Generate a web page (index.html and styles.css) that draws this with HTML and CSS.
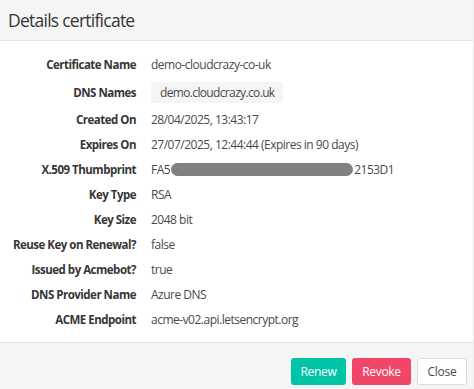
FILE: index.html
```html
<!DOCTYPE html>
<html>
<head>
<meta charset="utf-8">
<link rel="stylesheet" href="styles.css">
</head>
<body>
<div class="modal">
  <header class="head">
    <h1 class="title">Details certificate</h1>
  </header>
  <section class="body">
    <div class="row"><div class="label">Certificate Name</div><div class="value">demo-cloudcrazy-co-uk</div></div>
    <div class="row tall"><div class="label">DNS Names</div><div class="value"><span class="tag">demo.cloudcrazy.co.uk</span></div></div>
    <div class="row"><div class="label">Created On</div><div class="value">28/04/2025, 13:43:17</div></div>
    <div class="row"><div class="label">Expires On</div><div class="value">27/07/2025, 12:44:44 (Expires in 90 days)</div></div>
    <div class="row"><div class="label">X.509 Thumbprint</div><div class="value">FA5<span class="redact"></span>2153D1</div></div>
    <div class="row"><div class="label">Key Type</div><div class="value">RSA</div></div>
    <div class="row"><div class="label">Key Size</div><div class="value">2048 bit</div></div>
    <div class="row"><div class="label">Reuse Key on Renewal?</div><div class="value">false</div></div>
    <div class="row"><div class="label">Issued by Acmebot?</div><div class="value">true</div></div>
    <div class="row"><div class="label">DNS Provider Name</div><div class="value">Azure DNS</div></div>
    <div class="row"><div class="label">ACME Endpoint</div><div class="value">acme-v02.api.letsencrypt.org</div></div>
  </section>
  <footer class="foot">
    <button class="btn renew">Renew</button>
    <button class="btn revoke">Revoke</button>
    <button class="btn close">Close</button>
  </footer>
</div>
</body>
</html>
```
FILE: styles.css
```css
* { box-sizing: border-box; }
html, body { margin: 0; padding: 0; background: #fff; }
body { font-family: "Open Sans", "Noto Sans", sans-serif; color: #4a4a4a; }
.modal { width: 474px; height: 389px; display: flex; flex-direction: column; border-right: 1px solid #ececec; }
.head { height: 41px; background: #f5f5f5; border-bottom: 1px solid #e2e2e2; display: flex; align-items: center; padding-left: 8px; }
.title { margin: 0; font-size: 17.5px; font-weight: 400; color: #363636; letter-spacing: -0.75px; }
.body { flex: 1; padding-top: 11px; }
.row { display: grid; grid-template-columns: 136px 1fr; column-gap: 15px; height: 25px; align-items: center; font-size: 12px; }
.row.tall { height: 30px; }
.label { text-align: right; font-weight: 700; font-size: 11.5px; color: #363636; letter-spacing: -0.5px; white-space: nowrap; }
.value { color: #4a4a4a; white-space: nowrap; letter-spacing: -0.5px; display: flex; align-items: center; }
.tag { background: #f5f5f5; padding: 3px 8px 3px 9px; border-radius: 2px; height: 21px; display: inline-flex; align-items: center; letter-spacing: -0.65px; }
.redact { display: inline-block; width: 182px; height: 13px; background: #808080; border-radius: 7px; margin: 0 1px; }
.foot { height: 47px; background: #f5f5f5; border-top: 1px solid #e2e2e2; display: flex; justify-content: flex-end; align-items: flex-start; padding-top: 15px; padding-right: 6px; gap: 6px; }
.btn { font-family: inherit; font-size: 12px; letter-spacing: -0.3px; height: 27px; border-radius: 3px; border: 1px solid transparent; padding: 0; cursor: pointer; }
.renew { background: #00c4a7; color: #fff; width: 55px; }
.revoke { background: #f14668; color: #fff; width: 59px; }
.close { background: #fff; color: #4a4a4a; border-color: #dbdbdb; width: 50px; }
```
